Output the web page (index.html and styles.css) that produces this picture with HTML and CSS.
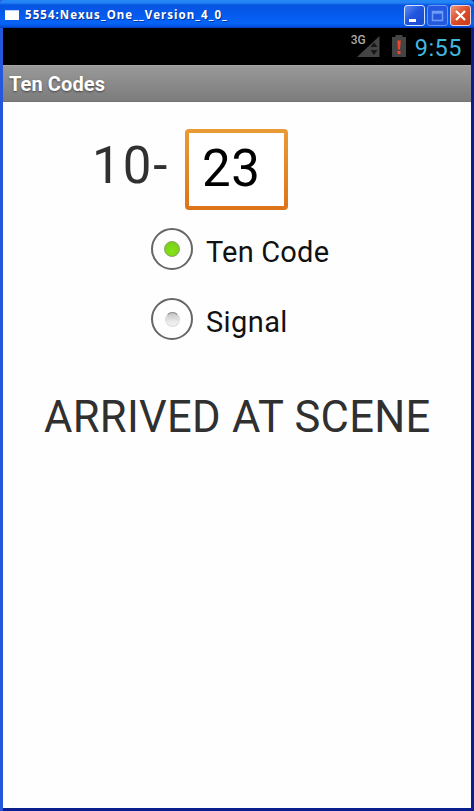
FILE: index.html
```html
<!DOCTYPE html>
<html lang="en">
<head>
<meta charset="utf-8">
<title>5554:Nexus_One__Version_4_0_</title>
<link rel="stylesheet" href="styles.css">
</head>
<body>
<div class="window">
  <header class="titlebar">
    <span class="app-icon"></span>
    <span class="caption">5554:Nexus_One__Version_4_0_</span>
    <div class="buttons">
      <span class="btn"><svg width="20" height="20"><path d="M4 13h7v3H4z" fill="#fff"/></svg></span>
      <span class="btn dim"><svg width="20" height="20"><path d="M4.500 5.500h10v9h-10zM4.500 7h10" fill="none" stroke="#6e9cf8" stroke-width="1.500"/></svg></span>
      <span class="btn close"><svg width="20" height="20"><path d="M5 5l9 9M14 5l-9 9" stroke="#fff" stroke-width="2.300"/></svg></span>
    </div>
  </header>
  <main class="screen">
    <div class="status">
      <span class="network">3G</span>
      <svg class="signal" width="24" height="24"><path d="M23.500 0V21H1z" fill="#444"/><path d="M14.500 11l3.500-4.500 3.500 4.500zM14.500 14h7L18 19z" fill="#171717"/></svg>
      <svg class="battery" width="16" height="24"><path d="M4.500 0h7v2H15v20H1V2h3.500z" fill="#444"/><path d="M6.300 5.500h3.400L9 14.500H7zM6.500 16h3v3h-3z" fill="#f0442c"/></svg>
      <span class="clock">9:55</span>
    </div>
    <div class="appbar"><h1>Ten Codes</h1></div>
    <div class="content">
      <div class="entry"><span class="prefix">10-</span><div class="field"><span>23</span></div></div>
      <div class="options">
        <div class="option"><span class="radio"><i class="dot on"></i></span><span class="label ten">Ten Code</span></div>
        <div class="option"><span class="radio"><i class="dot"></i></span><span class="label sig">Signal</span></div>
      </div>
      <div class="result">ARRIVED AT SCENE</div>
    </div>
  </main>
</div>
</body>
</html>
```
FILE: styles.css
```css
* { box-sizing: border-box; }
body { margin: 0; font-family: Roboto, sans-serif; background: #fff; }
.window { width: 474px; height: 811px; display: flex; flex-direction: column; background: #0a1e90; border-left: 3px solid #2457dc; }
.titlebar { height: 28px; flex: none; display: flex; align-items: center; margin-left: -3px; padding: 3px 3px 0 5px; border-radius: 4px 4px 0 0; background: linear-gradient(#2486f5 0 2px, #207ef0 3px, #0655e2 5px, #0559ec 14px, #0664f8 23px, #0557e5 26px, #0239bd); }
.app-icon { width: 14px; height: 10px; margin-top: -2px; background: #fff; border-top: 1px solid #b8d4ff; }
.caption { margin: -1px 0 0 6px; font: bold 11.500px/16px "Noto Sans", sans-serif; letter-spacing: 1.050px; color: #fff; text-shadow: 1px 1px #07328f; white-space: nowrap; }
.buttons { margin: -1px 0 0 auto; display: flex; gap: 2px; }
.btn { width: 21px; height: 21px; border: 1px solid #d5e3ff; border-radius: 3px; background: linear-gradient(135deg, #628df5, #2156de 45%, #1a4bd2); overflow: hidden; }
.btn svg { display: block; }
.btn.dim { border-color: #6d97f4; background: #2459df; }
.btn.close { background: linear-gradient(135deg, #ee977c, #dc4c28 50%, #c83b17); border-color: #f2d3d5; }
.screen { flex: 1; margin: 0 3px 3px 0; background: #fefefe; display: flex; flex-direction: column; }
.status { height: 37px; background: #000; display: flex; justify-content: flex-end; align-items: flex-start; padding: 7px 9px 0 0; }
.network { font-size: 12px; line-height: 13px; font-weight: 500; color: #aaa; margin: -1px -10px 0 0; }
.signal { margin: 1px 11px 0 0; }
.battery { margin-right: 8px; }
.clock { font-size: 23.500px; line-height: 28px; color: #43b6df; margin-top: -1px; letter-spacing: .5px; }
.appbar { height: 37px; background: linear-gradient(#999, #7c7c7c); border-top: 1px solid #a5a5a5; border-bottom: 1px solid #737373; padding: 6px 0 0 6px; }
h1 { margin: 0; font-size: 20px; line-height: 24px; font-weight: 700; letter-spacing: .1px; color: #fff; text-shadow: 0 1px 2px #444; }
.content { flex: 1; padding-top: 27px; }
.entry { display: flex; height: 81px; padding-left: 89px; }
.prefix { width: 93px; font-size: 51px; line-height: 74px; color: #303030; letter-spacing: 2px; white-space: nowrap; }
.field { width: 103px; height: 81px; border-radius: 4px; padding: 4px; background: linear-gradient(#e99b36, #dc7418); }
.field span { display: block; height: 73px; background: #fff; padding-left: 13px; font-size: 51px; line-height: 71px; letter-spacing: .5px; color: #000; }
.options { padding: 18px 0 0 148px; display: flex; flex-direction: column; gap: 28px; }
.option { height: 42px; display: flex; align-items: center; }
.radio { width: 42px; height: 42px; border: 2px solid #666; border-radius: 50%; display: grid; place-items: center; }
.dot { width: 15px; height: 15px; border-radius: 50%; background: linear-gradient(#c5c5c5, #eee 75%); border: 1px solid #ddd; border-top-color: #888; }
.dot.on { width: 16px; height: 16px; background: radial-gradient(circle at 50% 70%, #86e419, #74c916); border: 1px solid #88a663; }
.label { margin: 5px 0 0 13px; font-size: 29px; line-height: 34px; letter-spacing: .2px; color: #111; }
.label.sig { letter-spacing: .4px; }
.result { margin: 52px 0 0 41px; font-size: 43.500px; line-height: 52px; letter-spacing: .3px; color: #303030; white-space: nowrap; }
```
